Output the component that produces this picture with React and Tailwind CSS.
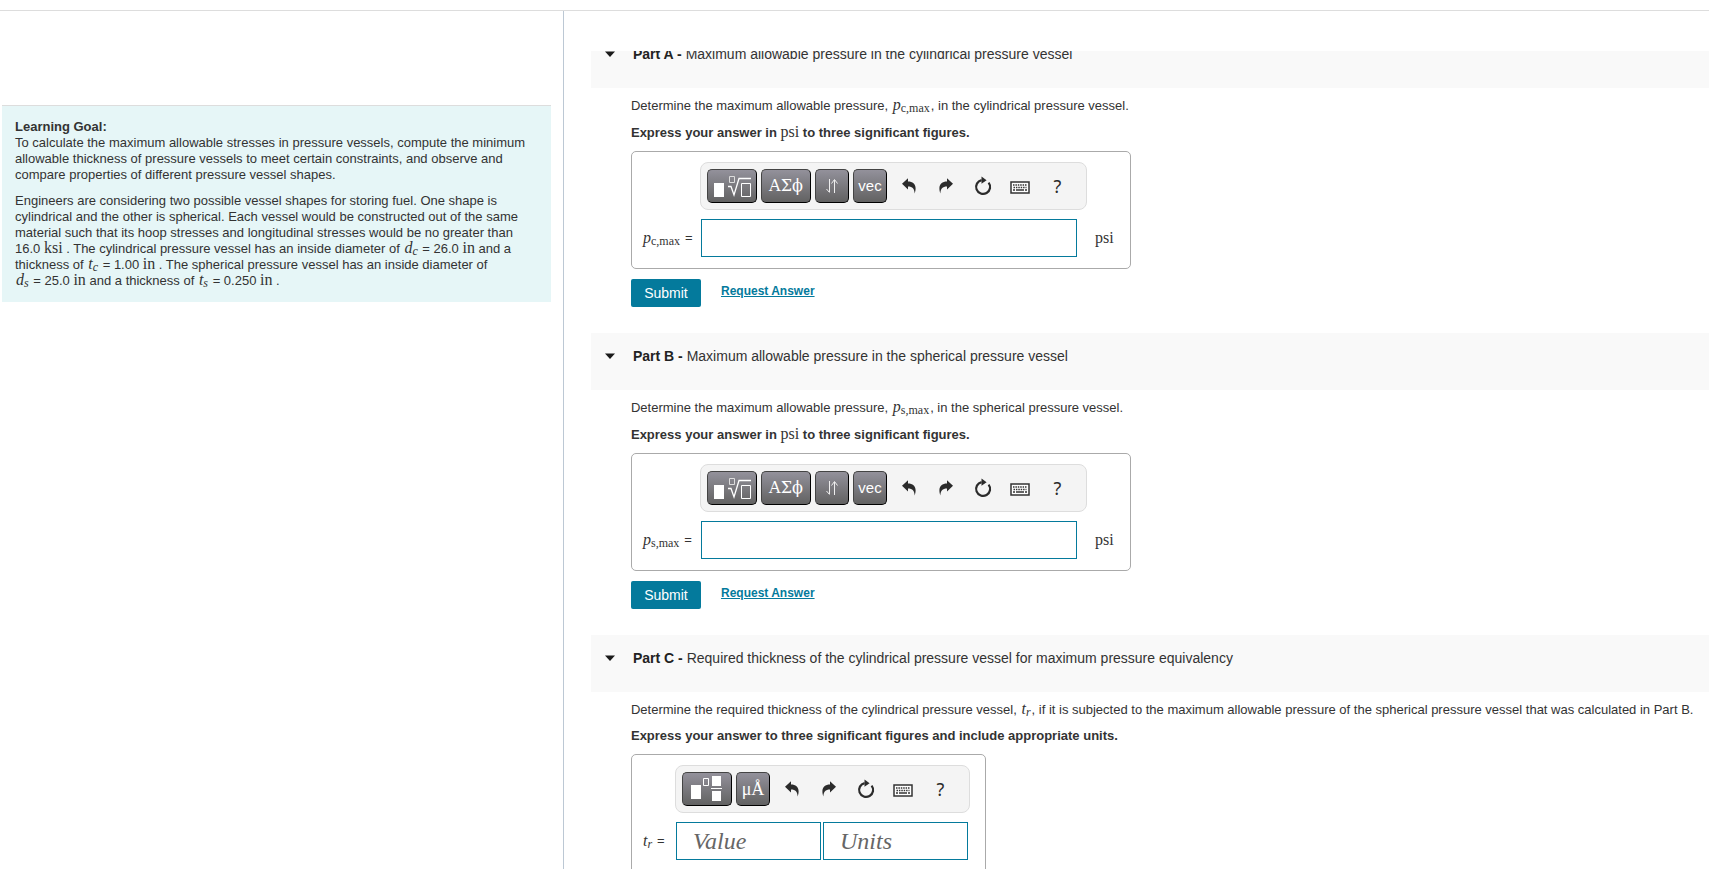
const Var = ({ name, sub, upright = false }) => (
  <span className='px-px font-["Liberation_Serif",serif] text-[16px] leading-[0] font-normal whitespace-nowrap'>
    <i>{name}</i>
    <sub className={upright ? "-bottom-0.5 text-[12px]" : "-bottom-0.5 text-[12px] italic"}>{sub}</sub>
  </span>
);

const Unit = ({ children }) => (
  <span className='font-["Liberation_Serif",serif] text-[16px] leading-[0] font-normal'>{children}</span>
);

const UndoIcon = ({ flip = false }) => (
  <svg width="14" height="16" viewBox="0 0 14 16" className={flip ? "-scale-x-100" : ""} aria-hidden="true">
    <path d="M0 5.800 6 .3v3.300c4.600 0 7.600 2.600 7.600 6.600 0 2-.4 3.800-1 5.200-.1-4.400-2-6.800-6.600-6.800v2.800z" fill="#2b2b2b" />
  </svg>
);

const ResetIcon = () => (
  <svg width="18" height="20" viewBox="0 0 18 20" aria-hidden="true">
    <path d="M14.600 6.600A7 7 0 1 1 7.600 4.100" fill="none" stroke="#2b2b2b" strokeWidth="2.200" />
    <path d="M7.500.6 12.600 4.200 7.500 7.800z" fill="#2b2b2b" />
  </svg>
);

const KeyboardIcon = () => (
  <svg width="20" height="16" viewBox="0 -3 20 16" aria-hidden="true">
    <rect x="1" y="1" width="18" height="11" fill="#fff" stroke="#333" strokeWidth="1.500" />
    <path d="M3 4h14M3.500 6.500h13" stroke="#333" strokeWidth="1.500" strokeDasharray="1.500 .9" />
    <path d="M3 9h2M6 9h8M15 9h2" stroke="#333" strokeWidth="1.500" />
  </svg>
);

const RootIcon = () => (
  <svg width="38" height="24" viewBox="-1 0 38 24" aria-hidden="true">
    <rect x="0" y="9" width="10" height="14" fill="#fff" />
    <path d="M15.500 2.500h5v6h-5z" fill="none" stroke="#ddd" />
    <path d="M14 12.500h3l3 8.500L25 4.500h12" fill="none" stroke="#fff" strokeWidth="1.300" />
    <path d="M27.500 9.500h9v13h-9z" fill="none" stroke="#fff" />
  </svg>
);

const FractionIcon = () => (
  <svg width="32" height="26" viewBox="1 0 32 26" aria-hidden="true">
    <rect x="1" y="9" width="10" height="14" fill="#fff" />
    <path d="M13.500 2.500h5v7h-5z" fill="none" stroke="#fff" />
    <rect x="22" y="0" width="9" height="10" fill="#fff" />
    <path d="M21 12.500h11" stroke="#fff" />
    <rect x="22" y="15" width="9" height="10" fill="#fff" />
  </svg>
);

const ArrowsIcon = () => (
  <svg width="14" height="18" viewBox="0 0 14 18" fill="none" stroke="#eee" aria-hidden="true">
    <path d="M4.500 2v13M1.500 12l3 3.500M9.500 16V3M6.500 6.500l3-4 3 4" />
  </svg>
);

const ToolButton = ({ label, wide = false, children }) => (
  <button
    type="button"
    aria-label={label}
    className={`flex h-[34px] items-center justify-center rounded-[5px] border border-t-[#444] border-r-black border-b-black border-l-[#444] bg-linear-to-b from-[#93919b] to-[#626262] text-white ${wide ? "w-[50px]" : "w-[34px]"}`}
  >
    {children}
  </button>
);

const IconButton = ({ label, children }) => (
  <button type="button" aria-label={label} className="flex h-[34px] w-[37px] items-center justify-center text-[#2b2b2b]">
    {children}
  </button>
);

const Toolbar = ({ children }) => (
  <div className="flex h-[48px] w-fit items-center rounded-lg border border-[#ddd] bg-[#f4f4f4] pr-2.5 pl-1.5">
    <div className="flex gap-1">{children}</div>
    <div className="ml-1 flex">
      <IconButton label="Undo"><UndoIcon /></IconButton>
      <IconButton label="Redo"><UndoIcon flip /></IconButton>
      <IconButton label="Reset"><ResetIcon /></IconButton>
      <IconButton label="Keyboard shortcuts"><KeyboardIcon /></IconButton>
      <IconButton label="Help">
        <span className='font-["Noto_Sans",sans-serif] text-[18px]'>?</span>
      </IconButton>
    </div>
  </div>
);

const Part = ({ title, subtitle, children }) => (
  <section className="pb-[26px]">
    <h2 className="flex h-[57px] gap-[18px] bg-[#f9f9f9] pt-[13px] pl-3.5 text-[14px] leading-5 text-[#333]">
      <svg width="10" height="20" viewBox="0 0 10 20" aria-hidden="true">
        <path d="M0 7.500h10L5 13z" fill="#1a1a1a" />
      </svg>
      <span>
        <b className="text-[#222]">{title} - </b>
        {subtitle}
      </span>
    </h2>
    <div className="flex flex-col items-start gap-2.5 pt-2.5 pl-10">{children}</div>
  </section>
);

const PressureAnswer = ({ id, sub }) => (
  <>
    <div className="h-[118px] rounded-[5px] border border-[#aaa] px-2.5 pt-2.5">
      <div className="pl-[58px]">
        <Toolbar>
          <ToolButton label="Templates" wide><RootIcon /></ToolButton>
          <ToolButton label="Symbols" wide>
            <span className='font-["DejaVu_Serif",serif] text-[16px]'>ΑΣϕ</span>
          </ToolButton>
          <ToolButton label="Arrows"><ArrowsIcon /></ToolButton>
          <ToolButton label="Vector"><span className="text-[15px]">vec</span></ToolButton>
        </Toolbar>
      </div>
      <div className="mt-[9px] flex items-center">
        <label htmlFor={id} className="flex w-[59px] items-center gap-1">
          <Var name="p" sub={`${sub},max`} upright />
          <span>=</span>
        </label>
        <input id={id} type="text" className="h-[38px] w-[376px] border border-[#047a9c] bg-white px-2" />
        <span className='ml-[18px] w-[25px] font-["Liberation_Serif",serif] text-[16px]'>psi</span>
      </div>
    </div>
    <div className="flex">
      <button type="button" className="h-7 w-[70px] rounded-[2px] bg-[#047a9c] text-[14px] text-white">Submit</button>
      <a href="#" className="ml-5 pt-1 text-[12px] font-bold text-[#047a9c] underline">Request Answer</a>
    </div>
  </>
);

const App = () => {
  return (
    <div className='h-screen overflow-hidden bg-white pt-2.5 font-["Liberation_Sans",Arial,sans-serif] text-[13px] leading-4 text-[#333]'>
      <div className="flex h-full border-t border-[#ddd]">
        <aside className="w-[33%] shrink-0 border-r border-[#bcc8d4] pt-[94px] pr-3 pl-0.5">
          <div className="border-t border-[#ddd] bg-[#e6f6f7] p-[13px]">
            <b>Learning Goal:</b>
            <p>
              To calculate the maximum allowable stresses in pressure vessels, compute the minimum allowable thickness
              of pressure vessels to meet certain constraints, and observe and compare properties of different pressure
              vessel shapes.
            </p>
            <p className="mt-2.5">
              Engineers are considering two possible vessel shapes for storing fuel. One shape is cylindrical and the
              other is spherical. Each vessel would be constructed out of the same material such that its hoop stresses
              and longitudinal stresses would be no greater than 16.0 <Unit>ksi</Unit> . The cylindrical pressure vessel
              has an inside diameter of <Var name="d" sub="c" /> = 26.0 <Unit>in</Unit> and a thickness of{" "}
              <Var name="t" sub="c" /> = 1.00 <Unit>in</Unit> . The spherical pressure vessel has an inside diameter of{" "}
              <span className="whitespace-nowrap">
                <Var name="d" sub="s" /> = 25.0 <Unit>in</Unit>
              </span>{" "}
              and a thickness of <Var name="t" sub="s" /> = 0.250 <Unit>in</Unit> .
            </p>
          </div>
        </aside>

        <main className="min-w-0 flex-1 pt-10 pl-[27px]">
          {/* the list is scrolled a little, so the first header is cut off */}
          <div className="h-full overflow-hidden">
            <div className="-mt-5">
              <Part title="Part A" subtitle="Maximum allowable pressure in the cylindrical pressure vessel">
                <p>
                  Determine the maximum allowable pressure, <Var name="p" sub="c,max" upright />, in the cylindrical
                  pressure vessel.
                </p>
                <p className="leading-[17px] font-bold">
                  Express your answer in <Unit>psi</Unit> to three significant figures.
                </p>
                <PressureAnswer id="pc" sub="c" />
              </Part>

              <Part title="Part B" subtitle="Maximum allowable pressure in the spherical pressure vessel">
                <p>
                  Determine the maximum allowable pressure, <Var name="p" sub="s,max" upright />, in the spherical
                  pressure vessel.
                </p>
                <p className="leading-[17px] font-bold">
                  Express your answer in <Unit>psi</Unit> to three significant figures.
                </p>
                <PressureAnswer id="ps" sub="s" />
              </Part>

              <Part
                title="Part C"
                subtitle="Required thickness of the cylindrical pressure vessel for maximum pressure equivalency"
              >
                <p>
                  Determine the required thickness of the cylindrical pressure vessel, <Var name="t" sub="r" />, if it
                  is subjected to the maximum allowable pressure of the spherical pressure vessel that was calculated in
                  Part B.
                </p>
                <p className="font-bold">Express your answer to three significant figures and include appropriate units.</p>
                <div className="h-[150px] rounded-[5px] border border-[#aaa] px-2.5 pt-2.5">
                  <div className="pr-[5px] pl-[33px]">
                    <Toolbar>
                      <ToolButton label="Templates" wide><FractionIcon /></ToolButton>
                      <ToolButton label="Unit symbols">
                        <span className='font-["Liberation_Serif",serif] text-[18px]'>μÅ</span>
                      </ToolButton>
                    </Toolbar>
                  </div>
                  <div className="mt-[9px] flex items-center">
                    <label htmlFor="tr-value" className="flex w-[34px] items-center gap-1">
                      <Var name="t" sub="r" />
                      <span>=</span>
                    </label>
                    <input
                      id="tr-value"
                      type="text"
                      placeholder="Value"
                      className='h-[38px] w-[145px] border border-[#047a9c] px-4 font-["Liberation_Serif",serif] text-[24px] italic placeholder:text-[#666]'
                    />
                    <input
                      type="text"
                      aria-label="Units"
                      placeholder="Units"
                      className='ml-0.5 h-[38px] w-[145px] border border-[#047a9c] px-4 font-["Liberation_Serif",serif] text-[24px] italic placeholder:text-[#666]'
                    />
                  </div>
                </div>
              </Part>
            </div>
          </div>
        </main>
      </div>
    </div>
  );
};

export default App;
